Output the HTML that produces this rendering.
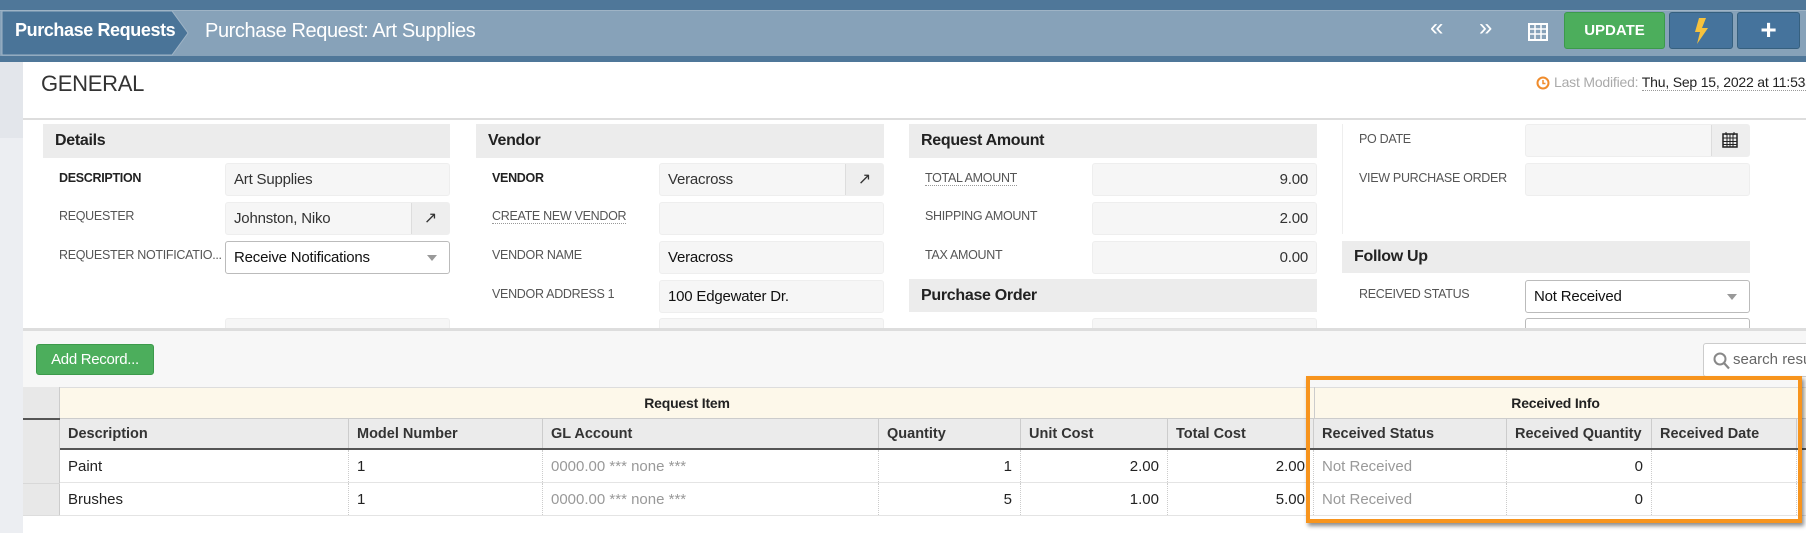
<!DOCTYPE html>
<html><head><meta charset="utf-8"><style>
*{box-sizing:border-box;margin:0;padding:0}
body{width:1806px;height:533px;overflow:hidden;background:#fff;font-family:"Liberation Sans",sans-serif;color:#222;position:relative}
.a{position:absolute}
.lbl{position:absolute;font-size:12.5px;color:#555;text-transform:uppercase;letter-spacing:-0.3px;white-space:nowrap}
.inp{position:absolute;background:#f6f6f6;border:1px solid #eee;border-radius:3px;height:33px;font-size:15px;line-height:31px;padding:0 8px;color:#333;letter-spacing:-0.2px}
.sel{background:#fff;border:1px solid #bbb;color:#111}
.ph{position:absolute;background:#ececec;height:34px;font-size:16px;font-weight:bold;line-height:34px;padding-left:12px;letter-spacing:-0.3px}
.tb{position:absolute;font-size:15px;letter-spacing:-0.2px;white-space:nowrap}
.cell{position:absolute;height:100%;top:0;border-right:1px dotted #ccc;padding:0 8px;line-height:inherit}
.caret{position:absolute;right:12px;top:13px;border-left:5px solid transparent;border-right:5px solid transparent;border-top:6px solid #999}
</style></head><body>
<!-- top bar -->
<div class="a" style="left:0;top:0;width:1806px;height:62px;background:#4f7799"></div>
<div class="a" style="left:0;top:10px;width:1806px;height:46px;background:#87a2b9;border-top:1px solid #9fb4c6"></div>
<svg class="a" style="left:0;top:10px" width="190" height="46"><polygon points="2,1 172,1 188,23 172,45 2,45" fill="#4a7498" stroke="#9fb4c6" stroke-width="1"/></svg>
<div class="a" style="left:15px;top:20px;font-size:18px;font-weight:bold;color:#fff;letter-spacing:-0.4px">Purchase Requests</div>
<div class="a" style="left:205px;top:20px;font-size:20px;color:#fff;letter-spacing:-0.4px">Purchase Request: Art Supplies</div>
<div class="a" style="left:1430px;top:14px;font-size:24px;color:#fff">«</div>
<div class="a" style="left:1479px;top:14px;font-size:24px;color:#fff">»</div>
<svg class="a" style="left:1528px;top:23px" width="20" height="18"><rect x="1" y="1" width="18" height="16" fill="none" stroke="#fff" stroke-width="2"/><path d="M1 6H19M1 11H19M7 1V17M13 1V17" stroke="#fff" stroke-width="1.5"/></svg>
<div class="a" style="left:1564px;top:12px;width:101px;height:37px;background:#4cae5c;border:1px solid #3c9a4b;border-radius:3px;color:#fff;font-weight:bold;font-size:15px;text-align:center;line-height:35px">UPDATE</div>
<div class="a" style="left:1669px;top:12px;width:64px;height:37px;background:#45739c;border:1px solid #36607f;border-radius:3px"></div>
<svg class="a" style="left:1690px;top:17px" width="22" height="28"><polygon points="9,1 16,1 12,11 18,11 7,27 10,15 5,15" fill="#f7c23c"/></svg>
<div class="a" style="left:1737px;top:12px;width:63px;height:37px;background:#45739c;border:1px solid #36607f;border-radius:3px;color:#fff;font-size:28px;font-weight:bold;text-align:center;line-height:34px">+</div>
<!-- sidebar -->
<div class="a" style="left:0;top:62px;width:23px;height:471px;background:#eceef2"></div>
<div class="a" style="left:0;top:62px;width:23px;height:76px;background:#e3e6eb"></div>
<!-- general -->
<div class="a" style="left:41px;top:71px;font-size:22px;color:#333;letter-spacing:-0.3px">GENERAL</div>
<svg class="a" style="left:1536px;top:76px" width="14" height="14"><circle cx="7" cy="7" r="5.5" fill="none" stroke="#f08c2c" stroke-width="2"/><path d="M7 4V7.5H9.5" stroke="#f08c2c" stroke-width="1.5" fill="none"/></svg>
<div class="a" style="left:1554px;top:74px;font-size:14px;color:#aaa;white-space:nowrap;letter-spacing:-0.2px">Last Modified: <span style="color:#222;border-bottom:1px dotted #999">Thu, Sep 15, 2022 at 11:53am</span></div>
<div class="a" style="left:23px;top:118px;width:1783px;height:2px;background:#ddd"></div>
<!-- panels -->
<div class="ph" style="left:43px;top:124px;width:407px">Details</div>
<div class="lbl" style="left:59px;top:171px;font-weight:bold;color:#222">Description</div>
<div class="inp" style="left:225px;top:163px;width:225px">Art Supplies</div>
<div class="lbl" style="left:59px;top:209px">Requester</div>
<div class="inp" style="left:225px;top:202px;width:225px">Johnston, Niko<span class="a" style="right:0;top:0;width:38px;height:31px;border-left:1px solid #ddd;background:#eee;text-align:center;font-size:16px">&#x2197;</span></div>
<div class="lbl" style="left:59px;top:248px">Requester Notificatio...</div>
<div class="inp sel" style="left:225px;top:241px;width:225px">Receive Notifications<span class="caret"></span></div>
<div class="inp" style="left:225px;top:318px;width:225px;height:20px"></div>

<div class="ph" style="left:476px;top:124px;width:408px">Vendor</div>
<div class="lbl" style="left:492px;top:171px;font-weight:bold;color:#222">Vendor</div>
<div class="inp" style="left:659px;top:163px;width:225px">Veracross<span class="a" style="right:0;top:0;width:38px;height:31px;border-left:1px solid #ddd;background:#eee;text-align:center;font-size:16px">&#x2197;</span></div>
<div class="lbl" style="left:492px;top:209px;border-bottom:1px dotted #999">Create New Vendor</div>
<div class="inp" style="left:659px;top:202px;width:225px"></div>
<div class="lbl" style="left:492px;top:248px">Vendor Name</div>
<div class="inp" style="left:659px;top:241px;width:225px;color:#111">Veracross</div>
<div class="lbl" style="left:492px;top:287px">Vendor Address 1</div>
<div class="inp" style="left:659px;top:280px;width:225px;color:#111">100 Edgewater Dr.</div>
<div class="inp" style="left:659px;top:318px;width:225px;height:20px"></div>

<div class="ph" style="left:909px;top:124px;width:408px">Request Amount</div>
<div class="lbl" style="left:925px;top:171px;border-bottom:1px dotted #999">Total Amount</div>
<div class="inp" style="left:1092px;top:163px;width:225px;text-align:right">9.00</div>
<div class="lbl" style="left:925px;top:209px">Shipping Amount</div>
<div class="inp" style="left:1092px;top:202px;width:225px;text-align:right">2.00</div>
<div class="lbl" style="left:925px;top:248px">Tax Amount</div>
<div class="inp" style="left:1092px;top:241px;width:225px;text-align:right">0.00</div>
<div class="ph" style="left:909px;top:279px;width:408px;height:33px;line-height:33px">Purchase Order</div>
<div class="inp" style="left:1092px;top:318px;width:225px;height:20px"></div>

<div class="a" style="left:1342px;top:124px;width:1px;height:110px;background:#eee"></div>
<div class="lbl" style="left:1359px;top:132px">PO Date</div>
<div class="inp" style="left:1525px;top:124px;width:225px">&nbsp;<span class="a" style="right:0;top:0;width:38px;height:31px;border-left:1px solid #ddd;background:#eee"></span></div>
<svg class="a" style="left:1722px;top:131px" width="16" height="17"><rect x="1" y="3" width="14" height="13" fill="none" stroke="#222" stroke-width="1.5"/><path d="M1 7H15M1 10.5H15M1 13.5H15M5 3V16M8 3V16M11 3V16M4 1V4M12 1V4" stroke="#222" stroke-width="1"/></svg>
<div class="lbl" style="left:1359px;top:171px">View Purchase Order</div>
<div class="inp" style="left:1525px;top:163px;width:225px"></div>
<div class="ph" style="left:1342px;top:241px;width:408px;height:32px;line-height:32px">Follow Up</div>
<div class="lbl" style="left:1359px;top:287px">Received Status</div>
<div class="inp sel" style="left:1525px;top:280px;width:225px">Not Received<span class="caret"></span></div>
<div class="inp sel" style="left:1525px;top:318px;width:225px;height:20px"></div>

<!-- bottom panel -->
<div class="a" style="left:23px;top:328px;width:1783px;height:205px;background:#f7f7f7;border-top:3px solid #ddd"></div>
<div class="a" style="left:36px;top:344px;width:118px;height:31px;background:#4cae5c;border:1px solid #3c9a4b;border-radius:3px;color:#fff;font-size:15px;text-align:center;line-height:29px;letter-spacing:-0.3px">Add Record...</div>
<div class="a" style="left:1703px;top:343px;width:110px;height:34px;background:#fff;border:1px solid #ccc;border-radius:3px"></div>
<svg class="a" style="left:1713px;top:352px" width="17" height="18"><circle cx="7" cy="7" r="5.5" fill="none" stroke="#888" stroke-width="2"/><path d="M11 11L16 16.5" stroke="#888" stroke-width="2.2"/></svg>
<div class="a" style="left:1733px;top:351px;font-size:15px;color:#666;white-space:nowrap">search resu</div>

<!-- table -->
<div class="a" style="left:23px;top:387px;width:1783px;height:146px;background:#fff"></div>
<div class="a" style="left:23px;top:387px;width:37px;height:128px;background:#e8e8e8;border-right:1px solid #ccc"></div>
<div class="a" style="left:60px;top:387px;width:1746px;height:32px;background:#fdf8ea;border-top:1px solid #ddd;border-bottom:1px solid #ccc"></div>
<div class="a" style="left:1314px;top:387px;width:1px;height:32px;background:#ccc"></div>
<div class="tb" style="left:60px;top:395px;width:1254px;text-align:center;font-weight:bold;font-size:14px">Request Item</div>
<div class="tb" style="left:1314px;top:395px;width:483px;text-align:center;font-weight:bold;font-size:14px">Received Info</div>
<div class="a" style="left:23px;top:418px;width:37px;height:2px;background:#555"></div>
<div class="a" style="left:60px;top:419px;width:1746px;height:31px;background:#ebebeb;border-bottom:2px solid #555;line-height:30px;font-weight:bold;font-size:14.5px;color:#333">
<div class="cell" style="left:0;width:289px;border-right:1px solid #ccc">Description</div>
<div class="cell" style="left:289px;width:194px;border-right:1px solid #ccc">Model Number</div>
<div class="cell" style="left:483px;width:336px;border-right:1px solid #ccc">GL Account</div>
<div class="cell" style="left:819px;width:142px;border-right:1px solid #ccc">Quantity</div>
<div class="cell" style="left:961px;width:147px;border-right:1px solid #ccc">Unit Cost</div>
<div class="cell" style="left:1108px;width:146px;border-right:1px solid #ccc">Total Cost</div>
<div class="cell" style="left:1254px;width:193px;border-right:1px solid #ccc">Received Status</div>
<div class="cell" style="left:1447px;width:145px;border-right:1px solid #ccc">Received Quantity</div>
<div class="cell" style="left:1592px;width:145px;border-right:1px solid #ccc">Received Date</div>
</div>
<div class="a" style="left:60px;top:450px;width:1746px;height:33px;border-bottom:1px solid #e4e4e4;line-height:33px;font-size:15px">
<div class="cell" style="left:0;width:289px">Paint</div>
<div class="cell" style="left:289px;width:194px">1</div>
<div class="cell" style="left:483px;width:336px;color:#999">0000.00 *** none ***</div>
<div class="cell" style="left:819px;width:142px;text-align:right">1</div>
<div class="cell" style="left:961px;width:147px;text-align:right">2.00</div>
<div class="cell" style="left:1108px;width:146px;text-align:right">2.00</div>
<div class="cell" style="left:1254px;width:193px;color:#999">Not Received</div>
<div class="cell" style="left:1447px;width:145px;text-align:right">0</div>
<div class="cell" style="left:1592px;width:145px"></div>
</div>
<div class="a" style="left:60px;top:483px;width:1746px;height:33px;border-bottom:1px solid #e4e4e4;line-height:33px;font-size:15px">
<div class="cell" style="left:0;width:289px">Brushes</div>
<div class="cell" style="left:289px;width:194px">1</div>
<div class="cell" style="left:483px;width:336px;color:#999">0000.00 *** none ***</div>
<div class="cell" style="left:819px;width:142px;text-align:right">5</div>
<div class="cell" style="left:961px;width:147px;text-align:right">1.00</div>
<div class="cell" style="left:1108px;width:146px;text-align:right">5.00</div>
<div class="cell" style="left:1254px;width:193px;color:#999">Not Received</div>
<div class="cell" style="left:1447px;width:145px;text-align:right">0</div>
<div class="cell" style="left:1592px;width:145px"></div>
</div>
<div class="a" style="left:23px;top:450px;width:37px;height:66px;border-bottom:1px solid #ddd;border-top:0"></div>
<div class="a" style="left:23px;top:483px;width:37px;height:1px;background:#d8d8d8"></div>
<!-- orange highlight -->
<div class="a" style="left:1306px;top:376px;width:496px;height:147px;border:4px solid #f7941d;box-shadow:2px 3px 4px rgba(0,0,0,0.45)"></div>
</body></html>
